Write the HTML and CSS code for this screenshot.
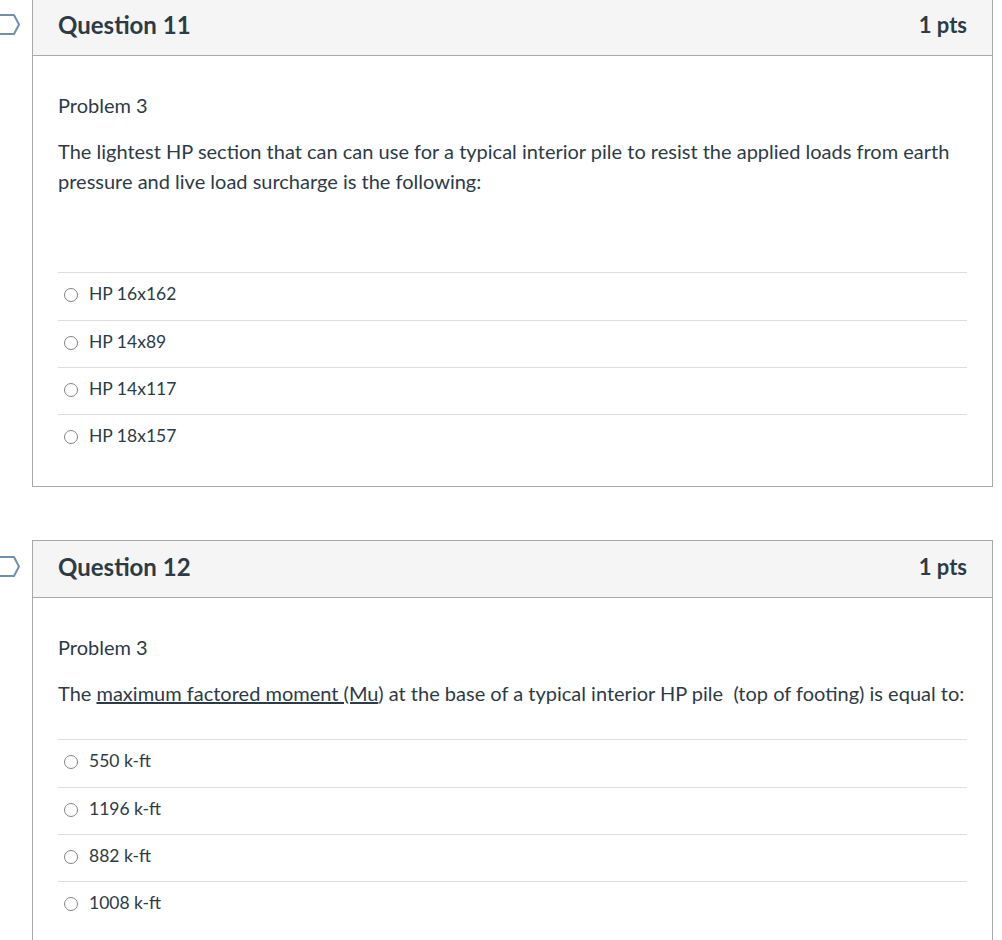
FILE: index.html
```html
<!DOCTYPE html>
<html>
<head>
<meta charset="utf-8">
<link rel="stylesheet" href="styles.css">
</head>
<body>
<div class="page">
  <div class="question">
    <svg class="flag" width="24" height="26" viewBox="0 0 24 26"><path d="M-5 3 H14 L19 12.5 L14 22 H-5" fill="none" stroke="#6f8fac" stroke-width="2" stroke-linejoin="round"/></svg>
    <div class="q-header">
      <span class="q-title">Question 11</span>
      <span class="q-pts">1 pts</span>
    </div>
    <div class="q-body">
      <p>Problem 3</p>
      <p>The lightest HP section that can can use for a typical interior pile to resist the applied loads from earth pressure and live load surcharge is the following:</p>
      <p class="spacer">&nbsp;</p>
      <div class="answers">
        <div class="answer"><span class="radio"></span><span>HP 16x162</span></div>
        <div class="answer"><span class="radio"></span><span>HP 14x89</span></div>
        <div class="answer"><span class="radio"></span><span>HP 14x117</span></div>
        <div class="answer"><span class="radio"></span><span>HP 18x157</span></div>
      </div>
    </div>
  </div>

  <div class="question">
    <svg class="flag" width="24" height="26" viewBox="0 0 24 26"><path d="M-5 3 H14 L19 12.5 L14 22 H-5" fill="none" stroke="#6f8fac" stroke-width="2" stroke-linejoin="round"/></svg>
    <div class="q-header">
      <span class="q-title">Question 12</span>
      <span class="q-pts">1 pts</span>
    </div>
    <div class="q-body">
      <p>Problem 3</p>
      <p>The <u>maximum factored moment (Mu</u>) at the base of a typical interior HP pile &nbsp;(top of footing) is equal to:</p>
      <div class="answers">
        <div class="answer"><span class="radio"></span><span>550 k-ft</span></div>
        <div class="answer"><span class="radio"></span><span>1196 k-ft</span></div>
        <div class="answer"><span class="radio"></span><span>882 k-ft</span></div>
        <div class="answer"><span class="radio"></span><span>1008 k-ft</span></div>
      </div>
    </div>
  </div>
</div>
</body>
</html>
```

FILE: styles.css
```css
html, body {
  margin: 0;
  padding: 0;
  background: #ffffff;
}
body {
  font-family: Lato, "Open Sans", sans-serif;
  color: #2d3b45;
  overflow: hidden;
}
.page {
  margin-top: -2px;
  padding-left: 32px;
  display: flex;
  flex-direction: column;
  gap: 53px;
}
.question {
  position: relative;
  width: 961px;
  box-sizing: border-box;
  border: 1px solid #a9a9a9;
}
.flag {
  position: absolute;
  left: -33px;
  top: 13px;
}
.q-header {
  height: 57px;
  box-sizing: border-box;
  background: #f5f5f5;
  border-bottom: 1px solid #a9a9a9;
  display: flex;
  align-items: center;
  justify-content: space-between;
  padding: 0 25px 6px;
}
.q-title {
  font-weight: 700;
  font-size: 24px;
}
.q-pts {
  font-weight: 700;
  font-size: 22px;
}
.q-body {
  padding: 18px 25px 25px;
}
.q-body p {
  margin: 16px 0;
  font-size: 20px;
  line-height: 30px;
}
.q-body p + p {
  margin-top: 15px;
}
.q-body p.spacer {
  line-height: 29px;
  margin-top: 16px;
}
.answers {
  margin-top: 31px;
}
.answer {
  border-top: 1px solid #dddddd;
  height: 47px;
  box-sizing: border-box;
  padding-top: 9px;
  display: flex;
  align-items: flex-start;
  font-size: 17.5px;
  line-height: 24px;
}
.answer:first-child {
  height: 48px;
}
.radio {
  width: 14px;
  height: 14px;
  box-sizing: border-box;
  border: 1.5px solid #858585;
  border-radius: 50%;
  margin: 6px 11px 0 6px;
  flex: none;
}
```
